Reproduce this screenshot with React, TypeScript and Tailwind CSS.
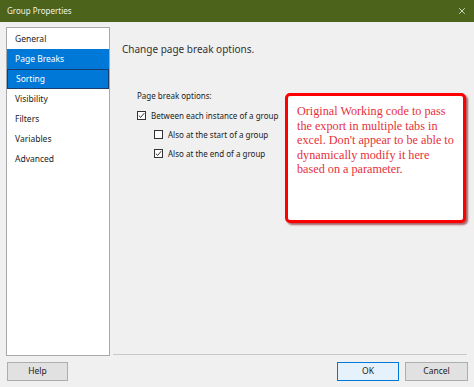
import { X } from 'lucide-react';

const sections = ['General', 'Page Breaks', 'Sorting', 'Visibility', 'Filters', 'Variables', 'Advanced'];

const noteLines = [
  'Original Working code to pass',
  'the export in multiple tabs in',
  "excel. Don't appear to be able to",
  'dynamically modify it here',
  'based on a parameter.',
];

function Check({ checked }: { checked: boolean }) {
  return (
    <span className="w-[9px] h-[9px] border border-[#333] bg-white flex items-center justify-center shrink-0">
      {checked && (
        <svg width="7" height="7" viewBox="0 0 7 7">
          <path d="M0.8 3.6 L2.7 5.4 L6.2 1.2" fill="none" stroke="#333" strokeWidth="1" />
        </svg>
      )}
    </span>
  );
}

export default function App() {
  return (
    <div className="w-[474px] h-[387px] bg-[#f0f0f0] flex flex-col relative overflow-hidden font-['Noto_Sans',sans-serif] text-[#222]">
      {/* Title bar */}
      <div className="h-[22px] bg-[#4b631a] flex items-center justify-between pl-[7px] pr-[7px]">
        <span className="text-[8px] text-[#f2f2e8]">Group Properties</span>
        <X size={10} strokeWidth={2} className="text-[#e8ecd8]" />
      </div>

      <div className="flex flex-1 pt-[5px] pl-[6px] pr-[7px]">
        {/* Section list */}
        <div className="w-[104px] h-[329px] bg-white border border-[#a9a9a9] pt-px">
          {sections.map((s, i) => (
            <div
              key={s}
              className={
                'h-[20px] flex items-center pl-[8px] text-[8.5px] ' +
                (i === 1
                  ? 'bg-[#0078d7] text-white'
                  : i === 2
                  ? 'bg-[#0078d7] text-white border border-[#1a3d6b]'
                  : 'text-[#222]')
              }
            >
              {s}
            </div>
          ))}
        </div>

        {/* Content */}
        <div className="flex-1 ml-[3px] h-[328px] border-b border-[#c8c8c8]">
          <div className="pl-[9px] pt-[15px] text-[10px] text-[#333]">Change page break options.</div>
          <div className="pl-[24px] pt-[32px] text-[8px] flex flex-col">
            <div className="h-[14px] flex items-center">Page break options:</div>
            <div className="h-[19px] mt-[3px] flex items-center gap-[5px]">
              <Check checked />
              <span>Between each instance of a group</span>
            </div>
            <div className="h-[19px] flex items-center gap-[5px] pl-[17px]">
              <Check checked={false} />
              <span>Also at the start of a group</span>
            </div>
            <div className="h-[19px] flex items-center gap-[5px] pl-[17px]">
              <Check checked />
              <span>Also at the end of a group</span>
            </div>
          </div>
        </div>
      </div>

      {/* Buttons */}
      <div className="h-[31px] flex items-start pt-[6px] pl-[7px] pr-[6px] text-[8.5px]">
        <button className="w-[61px] h-[19px] bg-[#e1e1e1] border border-[#adadad]">Help</button>
        <div className="flex-1" />
        <button className="w-[62px] h-[19px] bg-[#e5f1fb] border border-[#0078d7]">OK</button>
        <button className="w-[63px] h-[19px] ml-[6px] bg-[#e1e1e1] border border-[#adadad]">Cancel</button>
      </div>

      {/* Annotation callout */}
      <div className="absolute left-[285px] top-[93px] w-[181px] h-[130px] bg-white border-[3px] border-[#ff0000] rounded-[5px] shadow-[2px_2px_2px_rgba(120,0,0,0.6)] pl-[9px] pt-[8px] font-['Liberation_Serif',serif] text-[12.2px] leading-[14.5px] text-[#e8303a]">
        {noteLines.map((l) => (
          <div key={l} className="whitespace-nowrap">{l}</div>
        ))}
      </div>
    </div>
  );
}
